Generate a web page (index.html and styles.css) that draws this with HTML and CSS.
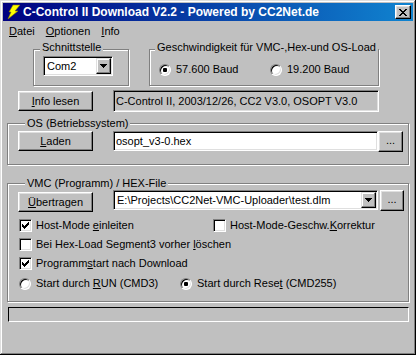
FILE: index.html
```html
<!DOCTYPE html>
<html lang="de">
<head>
    <meta charset="UTF-8">
    <link rel="stylesheet" href="styles.css">
    <title>C-Control II Download</title>
</head>

<body>
<div class="window">
    <div class="titlebar">
        <svg class="app-icon" width="16" height="16" viewBox="0 0 16 16">
            <path d="M8 1H15L10 7H13L3 15L6 8H4Z" fill="#ffff00" stroke="#8a7a00" stroke-width="0.6" stroke-linejoin="bevel"/>
        </svg>
        <span class="title">C-Control II Download V2.2 - Powered by CC2Net.de</span>
        <span class="close">
            <svg width="8" height="7" viewBox="0 0 8 7"><path d="M0 0h2v1h-2zM6 0h2v1h-2zM1 1h2v1h-2zM5 1h2v1h-2zM2 2h4v1h-4zM3 3h2v1h-2zM2 4h4v1h-4zM1 5h2v1h-2zM5 5h2v1h-2zM0 6h2v1h-2zM6 6h2v1h-2z" fill="#000"/></svg>
        </span>
    </div>

    <div class="menubar">
        <span class="menu"><u>D</u>atei</span>
        <span class="menu"><u>O</u>ptionen</span>
        <span class="menu"><u>I</u>nfo</span>
    </div>

    <div class="top-row">
        <fieldset class="group port">
            <legend>Schnittstelle</legend>
            <div class="combo port-combo">
                <span class="combo-text">Com2</span>
                <span class="drop"><svg width="7" height="4" viewBox="0 0 7 4"><path d="M0 0h7v1h-7zM1 1h5v1h-5zM2 2h3v1h-3zM3 3h1v1h-1z" fill="#000"/></svg></span>
            </div>
        </fieldset>
        <fieldset class="group speed">
            <legend>Geschwindigkeit für VMC-,Hex-und OS-Load</legend>
            <div class="speed-row">
                <span class="opt speed-first"><span class="radio on"></span><span>57.600 Baud</span></span>
                <span class="opt"><span class="radio"></span><span>19.200 Baud</span></span>
            </div>
        </fieldset>
    </div>

    <div class="info-row">
        <button class="btn"><span><u>I</u>nfo lesen</span></button>
        <div class="field readonly">C-Control II, 2003/12/26, CC2 V3.0, OSOPT V3.0</div>
    </div>

    <fieldset class="group wide os">
        <legend>OS (Betriebssystem)</legend>
        <div class="file-row os-row">
            <button class="btn"><span><u>L</u>aden</span></button>
            <div class="field path">osopt_v3-0.hex</div>
            <button class="btn dots">...</button>
        </div>
    </fieldset>

    <fieldset class="group wide vmc">
        <legend>VMC (Programm) / HEX-File</legend>
        <div class="file-row">
            <button class="btn send"><span><u>Ü</u>bertragen</span></button>
            <div class="combo path">
                <span class="combo-text">E:\Projects\CC2Net-VMC-Uploader\test.dlm</span>
                <span class="drop"><svg width="7" height="4" viewBox="0 0 7 4"><path d="M0 0h7v1h-7zM1 1h5v1h-5zM2 2h3v1h-3zM3 3h1v1h-1z" fill="#000"/></svg></span>
            </div>
            <button class="btn dots vmc-dots">...</button>
        </div>

        <div class="options">
            <div class="opt-row">
                <span class="opt col1"><span class="box"><svg width="11" height="11" viewBox="0 0 11 11"><path d="M2 4h1v3h-1zM3 5h1v3h-1zM4 6h1v3h-1zM5 5h1v3h-1zM6 4h1v3h-1zM7 3h1v3h-1zM8 2h1v3h-1z" fill="#000"/></svg></span><span>Host-Mode <u>e</u>inleiten</span></span>
                <span class="opt"><span class="box"></span><span>Host-Mode-Geschw.<u>K</u>orrektur</span></span>
            </div>
            <div class="opt-row">
                <span class="opt"><span class="box"></span><span>Bei Hex-Load Segment3 vorher <u>l</u>öschen</span></span>
            </div>
            <div class="opt-row">
                <span class="opt"><span class="box"><svg width="11" height="11" viewBox="0 0 11 11"><path d="M2 4h1v3h-1zM3 5h1v3h-1zM4 6h1v3h-1zM5 5h1v3h-1zM6 4h1v3h-1zM7 3h1v3h-1zM8 2h1v3h-1z" fill="#000"/></svg></span><span>Programm<u>s</u>tart nach Download</span></span>
            </div>
            <div class="opt-row radio-row">
                <span class="opt col1r"><span class="radio"></span><span>Start durch <u>R</u>UN (CMD3)</span></span>
                <span class="opt"><span class="radio on"></span><span>Start durch Rese<u>t</u> (CMD255)</span></span>
            </div>
        </div>
    </fieldset>

    <div class="status"></div>
</div>
</body>
</html>
```

FILE: styles.css
```css
body {
    margin: 0;
    font-family: "Liberation Sans", Arial, sans-serif;
    font-size: 11px;
    line-height: 13px;
    color: #000;
    background-color: #c0c0c0;
}

.window {
    width: 416px;
    height: 355px;
    box-sizing: border-box;
    padding: 3px;
    background-color: #c0c0c0;
    box-shadow: inset -1px -1px #000, inset 1px 1px #dfdfdf, inset -2px -2px #808080, inset 2px 2px #fff;
}

/* title + menu */

.titlebar {
    height: 18px;
    display: flex;
    align-items: center;
    padding: 0 2px;
    background: linear-gradient(to right, #000080, #1084d0);
    color: #fff;
}

.app-icon {
    flex: none;
}

.title {
    flex: 1;
    margin-left: 2px;
    font-size: 12px;
    font-weight: bold;
    white-space: nowrap;
}

.close {
    width: 16px;
    height: 14px;
    box-sizing: border-box;
    display: flex;
    align-items: center;
    justify-content: center;
    background-color: #c0c0c0;
    border: 1px solid;
    border-color: #fff #000 #000 #fff;
    box-shadow: inset -1px -1px #808080, inset 1px 1px #dfdfdf;
}

.menubar {
    display: flex;
    height: 20px;
    box-sizing: border-box;
    padding: 4px 0 3px 1px;
}

.menu {
    padding: 0 5px;
}

.menu + .menu {
    padding-left: 6px;
}

/* group boxes */

.group {
    margin: 0;
    padding: 0;
    min-width: 0;
    box-sizing: border-box;
    border: 1px solid #808080;
    box-shadow: inset 1px 1px #fff, 1px 1px #fff;
}

.group legend {
    padding: 0 2px;
    margin-left: 7px;
    background-color: #c0c0c0;
}

.top-row {
    display: flex;
    padding-left: 30px;
}

.top-row legend {
    padding-bottom: 4px;
}

.port {
    width: 96px;
    height: 45px;
    padding-left: 9px;
}

.port legend {
    margin-left: -3px;
}

.speed {
    width: 230px;
    height: 45px;
    margin-left: 20px;
    padding-left: 9px;
}

.speed legend {
    margin-left: -4px;
}

.speed-row {
    display: flex;
    margin-top: 5px;
}

.speed-first {
    width: 111px;
}

.wide {
    width: 402px;
    margin-left: 4px;
    padding-left: 10px;
}

.os {
    height: 48px;
    margin-top: 5px;
}

.vmc {
    height: 125px;
    margin-top: 12px;
}

/* controls */

.btn {
    width: 75px;
    height: 20px;
    box-sizing: border-box;
    padding: 0;
    display: flex;
    align-items: center;
    justify-content: center;
    font: inherit;
    color: #000;
    background-color: #c0c0c0;
    border: 1px solid;
    border-color: #fff #000 #000 #fff;
    box-shadow: inset -1px -1px #808080, inset 1px 1px #dfdfdf;
    flex: none;
}

.field,
.combo {
    box-sizing: border-box;
    height: 20px;
    display: flex;
    align-items: center;
    padding-left: 2px;
    background-color: #fff;
    border: 1px solid;
    border-color: #808080 #fff #fff #808080;
    box-shadow: inset 1px 1px #000, inset -1px -1px #dfdfdf;
    white-space: nowrap;
    flex: none;
}

.info-row {
    display: flex;
    align-items: center;
    margin-top: 4px;
    padding-left: 15px;
}

.readonly {
    width: 266px;
    height: 22px;
    margin-left: 20px;
    background-color: #c0c0c0;
}

.file-row {
    display: flex;
    align-items: flex-start;
}

.os-row {
    margin-top: 1px;
}

.path {
    width: 265px;
    margin-left: 20px;
}

.dots {
    width: 25px;
    height: 21px;
    padding-bottom: 2px;
}

.vmc-dots {
    width: 24px;
    margin-left: 2px;
}

.send {
    margin-top: 2px;
}

.combo-text {
    flex: 1;
    overflow: hidden;
    padding-left: 1px;
}

.port-combo {
    width: 70px;
    margin-top: -2px;
}

.drop {
    width: 15px;
    height: 16px;
    margin-right: 1px;
    box-sizing: border-box;
    display: flex;
    align-items: center;
    justify-content: center;
    background-color: #c0c0c0;
    border: 1px solid;
    border-color: #dfdfdf #000 #000 #dfdfdf;
    box-shadow: inset -1px -1px #808080, inset 1px 1px #fff;
}

/* checkboxes and radios */

.options {
    margin: 7px 0 0 1px;
}

.opt-row {
    display: flex;
    height: 13px;
    margin-bottom: 6px;
}

.radio-row {
    margin-top: 7px;
}

.opt {
    display: flex;
    align-items: center;
    white-space: nowrap;
}

.col1 {
    width: 194px;
}

.col1r {
    width: 161px;
}

.box {
    width: 13px;
    height: 13px;
    box-sizing: border-box;
    margin-right: 4px;
    flex: none;
    background-color: #fff;
    border: 1px solid;
    border-color: #808080 #fff #fff #808080;
    box-shadow: inset 1px 1px #000, inset -1px -1px #dfdfdf;
}

.box svg {
    display: block;
}

.radio {
    position: relative;
    width: 12px;
    height: 12px;
    box-sizing: border-box;
    margin-right: 5px;
    flex: none;
    border-radius: 50%;
    background-color: #fff;
    border: 1px solid;
    border-color: #808080 #fff #fff #808080;
    box-shadow: inset 1px 1px #000, inset -1px -1px #dfdfdf;
}

.radio.on::after {
    content: "";
    position: absolute;
    left: 3px;
    top: 3px;
    width: 4px;
    height: 4px;
    border-radius: 1px;
    background-color: #000;
}

.status {
    width: 401px;
    height: 15px;
    box-sizing: border-box;
    margin: 5px 0 0 5px;
    border: 1px solid;
    border-color: #000 #fff #fff #000;
}
```
